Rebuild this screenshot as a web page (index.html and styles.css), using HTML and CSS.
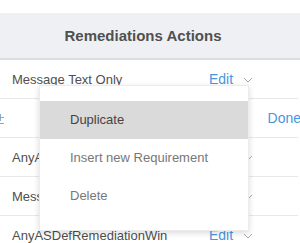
FILE: index.html
```html
<!DOCTYPE html>
<html lang="en">
<head>
  <meta charset="UTF-8" />
  <meta name="viewport" content="width=device-width, initial-scale=1.0">
  <title>Remediations Actions</title>
  <link rel="stylesheet" href="styles.css">
</head>
<body>
  <div class="panel">
    <div class="panel-head">Remediations Actions</div>

    <div class="rows">
      <div class="row">
        <span class="label">Message Text Only</span>
        <span class="actions"><a class="edit">Edit</a><svg class="chev" width="10" height="6" viewBox="0 0 10 6"><polyline points="1,1 5,5 9,1" /></svg></span>
      </div>
      <div class="row editing">
        <svg class="add" width="8" height="14" viewBox="0 0 8 14"><path d="M0 6.5H6M2.5 3V10M0 12.5H6" /></svg>
        <a class="done">Done</a>
      </div>
      <div class="row">
        <span class="label">AnyASDefRemediationWin</span>
        <span class="actions"><a class="edit">Edit</a><svg class="chev" width="10" height="6" viewBox="0 0 10 6"><polyline points="1,1 5,5 9,1" /></svg></span>
      </div>
      <div class="row">
        <span class="label">Message Text Only</span>
        <span class="actions"><a class="edit">Edit</a><svg class="chev" width="10" height="6" viewBox="0 0 10 6"><polyline points="1,1 5,5 9,1" /></svg></span>
      </div>
      <div class="row">
        <span class="label">AnyASDefRemediationWin</span>
        <span class="actions"><a class="edit">Edit</a><svg class="chev" width="10" height="6" viewBox="0 0 10 6"><polyline points="1,1 5,5 9,1" /></svg></span>
      </div>
    </div>

    <!-- dropdown opened from the first row -->
    <ul class="menu">
      <li class="active">Duplicate</li>
      <li>Insert new Requirement</li>
      <li>Delete</li>
    </ul>
  </div>
</body>
</html>
```

FILE: styles.css
```css
body {
  margin: 0;
  font-family: "Liberation Sans", Arial, sans-serif;
  background: #fff;
  overflow: hidden;
}

.panel {
  position: relative;
  padding-top: 13px;
}

.panel-head {
  height: 45px;
  line-height: 45px;
  background: #eff0f3;
  border-bottom: 2px solid #dcdde0;
  font-size: 15px;
  font-weight: bold;
  color: #505050;
  padding-right: 14px;
  text-align: center;
}

.rows {
  margin-right: 2px;
}

.row {
  height: 38px;
  border-bottom: 1px solid #e8e8ea;
  display: flex;
  align-items: center;
  font-size: 13px;
  color: #4f4f4f;
}

.label {
  flex: 1;
  padding-left: 12px;
  white-space: nowrap;
}

.actions {
  width: 89px;
  display: flex;
  align-items: center;
}

.edit,
.done {
  color: #4a96dc;
  font-size: 14px;
}

.chev {
  margin-left: 10px;
  margin-top: 1px;
}

.chev polyline {
  fill: none;
  stroke: #a8a8a8;
  stroke-width: 1;
}

.editing {
  justify-content: space-between;
}

.add {
  margin-left: -2px;
}

.add path {
  fill: none;
  stroke: #8aa8c8;
  stroke-width: 1;
}

.done {
  margin-right: -3px;
}

.menu {
  position: absolute;
  left: 39px;
  top: 85px;
  width: 210px;
  margin: 0;
  padding: 15px 0;
  list-style: none;
  background: #fff;
  border: 1px solid #ececec;
  box-sizing: border-box;
  box-shadow: 0 2px 6px rgba(0, 0, 0, 0.15);
}

.menu li {
  height: 38px;
  line-height: 38px;
  padding-left: 30px;
  font-size: 13px;
  color: #777;
}

.menu li.active {
  background: #dadada;
  color: #444;
}
```
